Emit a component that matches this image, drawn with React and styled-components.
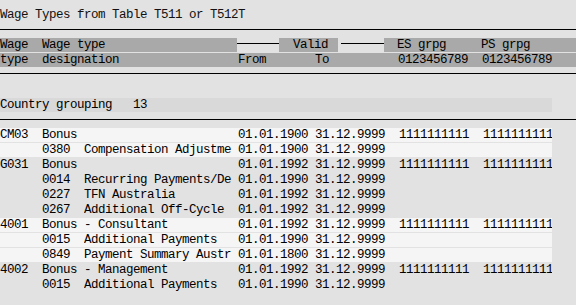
import React from 'react';
import styled, { createGlobalStyle } from 'styled-components';

const GlobalStyle = createGlobalStyle`
  html, body {
    margin: 0;
    padding: 0;
    background: #e2e2e2;
  }
  body {
    font-family: "Liberation Mono", "DejaVu Sans Mono", monospace;
    font-size: 12.5px;
    letter-spacing: -0.5px;
    color: #000;
  }
`;

const groups = [
  {
    code: 'CM03',
    text: 'Bonus',
    from: '01.01.1900',
    to: '31.12.9999',
    es: '1111111111',
    ps: '1111111111',
    light: true,
    items: [
      { code: '0380', text: 'Compensation Adjustme', from: '01.01.1900', to: '31.12.9999' },
    ],
  },
  {
    code: 'G031',
    text: 'Bonus',
    from: '01.01.1992',
    to: '31.12.9999',
    es: '1111111111',
    ps: '1111111111',
    light: false,
    items: [
      { code: '0014', text: 'Recurring Payments/De', from: '01.01.1990', to: '31.12.9999' },
      { code: '0227', text: 'TFN Australia', from: '01.01.1992', to: '31.12.9999' },
      { code: '0267', text: 'Additional Off-Cycle', from: '01.01.1992', to: '31.12.9999' },
    ],
  },
  {
    code: '4001',
    text: 'Bonus - Consultant',
    from: '01.01.1992',
    to: '31.12.9999',
    es: '1111111111',
    ps: '1111111111',
    light: true,
    items: [
      { code: '0015', text: 'Additional Payments', from: '01.01.1990', to: '31.12.9999' },
      { code: '0849', text: 'Payment Summary Austr', from: '01.01.1800', to: '31.12.9999' },
    ],
  },
  {
    code: '4002',
    text: 'Bonus - Management',
    from: '01.01.1992',
    to: '31.12.9999',
    es: '1111111111',
    ps: '1111111111',
    light: false,
    items: [
      { code: '0015', text: 'Additional Payments', from: '01.01.1990', to: '31.12.9999' },
    ],
  },
];

const Page = styled.div`
  display: flex;
  flex-direction: column;
  width: 576px;
  height: 305px;
  padding-top: 8px;
  box-sizing: border-box;
  overflow: hidden;
`;

const Title = styled.div`
  height: 15px;
  line-height: 15px;
  white-space: pre;
  color: #111;
`;

const Rule = styled.div`
  height: 1px;
  background: #000;
  margin: ${(p) => p.$top}px 0 ${(p) => p.$bottom}px;
`;

const Row = styled.div`
  display: flex;
  height: 14px;
  line-height: 14px;
  margin-bottom: 1px;
  white-space: pre;
  width: ${(p) => p.$width || 552}px;
  background: ${(p) => p.$bg || 'transparent'};
`;

const Cell = styled.span`
  flex: 0 0 ${(p) => p.$w}px;
  width: ${(p) => p.$w}px;
  overflow: hidden;
`;

const HeadBlock = styled.div`
  display: flex;
  height: 14px;
  background: #a9a9a9;
  width: ${(p) => p.$w}px;
  padding-left: ${(p) => p.$pad || 0}px;
  box-sizing: border-box;
  flex: ${(p) => (p.$grow ? '1 1 auto' : '0 0 auto')};
`;

const Connector = styled.div`
  flex: 0 0 ${(p) => p.$w}px;
  margin-left: ${(p) => p.$gap || 0}px;
  height: 1px;
  margin-top: 5px;
  background: #000;
`;

const HeaderRow = styled.div`
  display: flex;
  height: 14px;
  line-height: 14px;
  margin-bottom: 1px;
  white-space: pre;
  width: 576px;
`;

const Blank = styled.div`
  height: 15px;
`;

const GroupRows = ({ group }) => {
  const bg = group.light ? '#f5f5f5' : 'transparent';
  return (
    <>
      <Row $bg={bg}>
        <Cell $w={42}>{group.code}</Cell>
        <Cell $w={196}>{group.text}</Cell>
        <Cell $w={77}>{group.from}</Cell>
        <Cell $w={84}>{group.to}</Cell>
        <Cell $w={84}>{group.es}</Cell>
        <Cell $w={69}>{group.ps}</Cell>
      </Row>
      {group.items.map((item) => (
        <Row key={item.code + item.text} $bg={bg}>
          <Cell $w={42} />
          <Cell $w={42}>{item.code}</Cell>
          <Cell $w={154}>{item.text}</Cell>
          <Cell $w={77}>{item.from}</Cell>
          <Cell $w={84}>{item.to}</Cell>
        </Row>
      ))}
    </>
  );
};

const App = () => (
  <>
    <GlobalStyle />
    <Page>
      <Title>Wage Types from Table T511 or T512T</Title>
      <Rule $top={6} $bottom={8} />

      <HeaderRow>
        <HeadBlock $w={237}>
          <Cell $w={42}>Wage</Cell>
          <Cell $w={150}>Wage type</Cell>
        </HeadBlock>
        <Connector $w={42} />
        <HeadBlock $w={59} $pad={14}>Valid</HeadBlock>
        <Connector $w={43} $gap={3} />
        <HeadBlock $grow $pad={13}>
          <Cell $w={84}>ES grpg</Cell>
          <Cell $w={84}>PS grpg</Cell>
        </HeadBlock>
      </HeaderRow>
      <HeaderRow>
        <HeadBlock $w={576}>
          <Cell $w={42}>type</Cell>
          <Cell $w={196}>designation</Cell>
          <Cell $w={77}>From</Cell>
          <Cell $w={83}>To</Cell>
          <Cell $w={84}>0123456789</Cell>
          <Cell $w={84}>0123456789</Cell>
        </HeadBlock>
      </HeaderRow>
      <Rule $top={5} $bottom={9} />
      <Blank />

      <Row $bg="#d9d9d9">
        <Cell $w={133}>Country grouping</Cell>
        <Cell $w={42}>13</Cell>
      </Row>
      <Rule $top={6} $bottom={8} />

      {groups.map((g) => (
        <GroupRows key={g.code} group={g} />
      ))}
    </Page>
  </>
);

export default App;
